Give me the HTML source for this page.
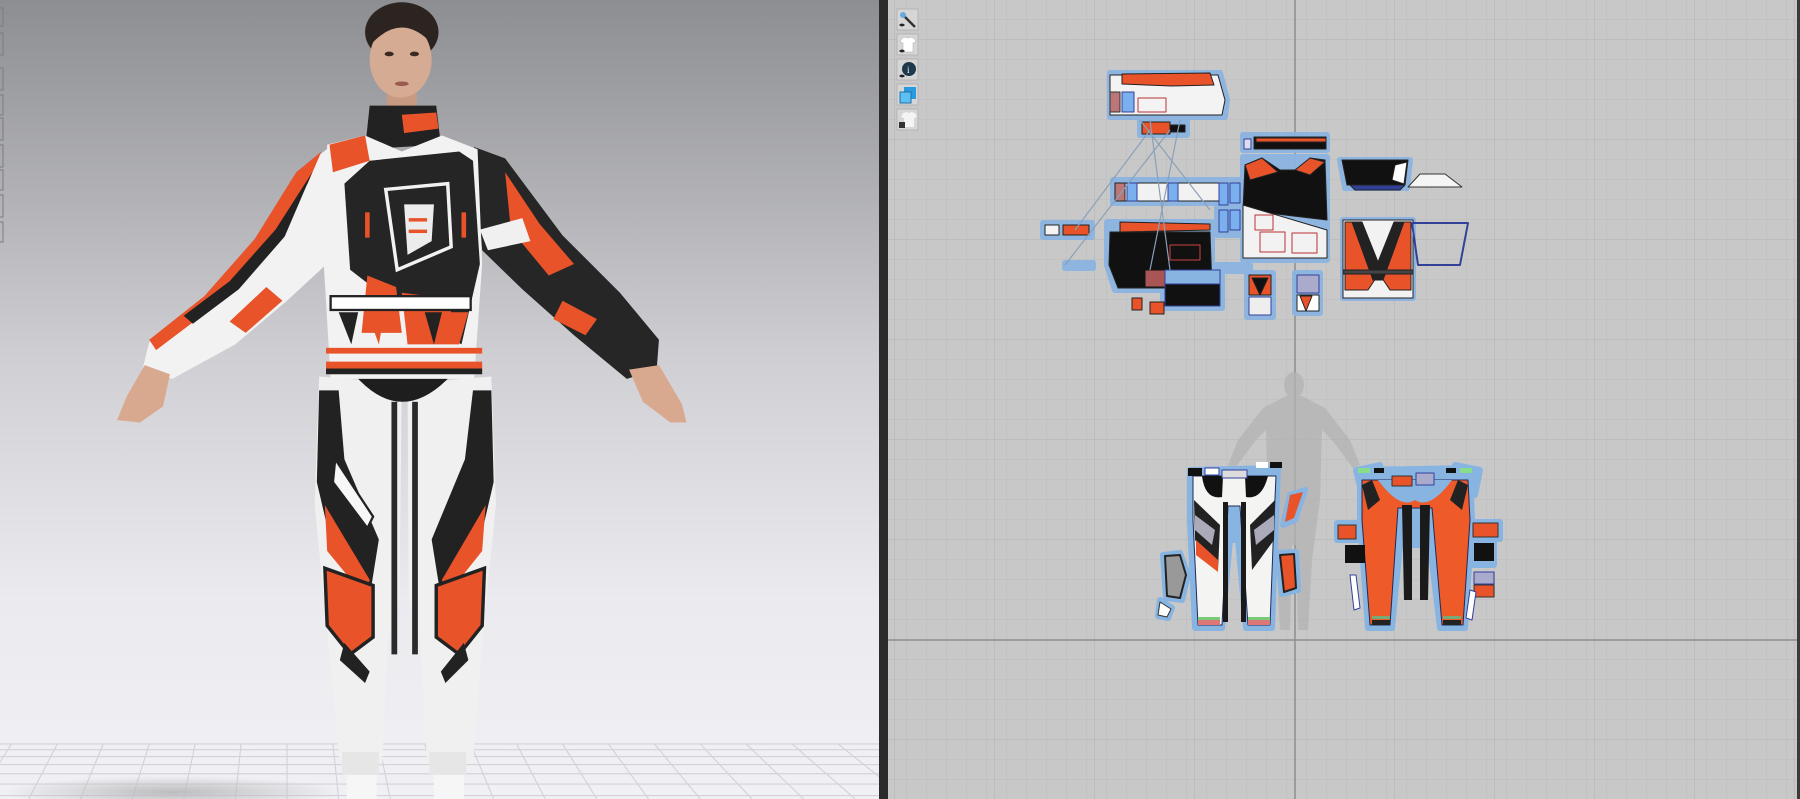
<!DOCTYPE html>
<html><head><meta charset="utf-8"><style>
html,body{margin:0;padding:0;width:1800px;height:799px;overflow:hidden;background:#c8c8c8;font-family:"Liberation Sans",sans-serif}
svg{display:block}
</style></head><body>
<svg width="1800" height="799" viewBox="0 0 1800 799" xmlns="http://www.w3.org/2000/svg">
<defs>
<linearGradient id="lg" x1="0" y1="0" x2="0" y2="1">
<stop offset="0" stop-color="#8d8e92"/><stop offset="0.45" stop-color="#cfcfd4"/><stop offset="0.75" stop-color="#eaeaef"/><stop offset="1" stop-color="#f1f1f5"/></linearGradient>
<pattern id="g1" width="20" height="20" patternUnits="userSpaceOnUse" x="887" y="0"><path d="M20 0V20M0 20H20" stroke="#bcbcbc" stroke-width="1" fill="none"/></pattern>
<pattern id="g2" width="100" height="100" patternUnits="userSpaceOnUse" x="895" y="40"><path d="M100 0V100M0 100H100" stroke="#b2b2b2" stroke-width="1" fill="none"/></pattern>
<radialGradient id="sh"><stop offset="0" stop-color="#bdbdc0"/><stop offset="1" stop-color="#bdbdc0" stop-opacity="0"/></radialGradient>
</defs>
<rect x="0" y="0" width="880" height="799" fill="url(#lg)"/>
<g fill="none" stroke="#7c7c80" stroke-width="1">
<rect x="-3" y="8" width="6" height="18"/><rect x="-3" y="33" width="6" height="22"/><rect x="-3" y="68" width="6" height="22"/><rect x="-3" y="95" width="6" height="20"/><rect x="-3" y="118" width="6" height="22"/><rect x="-3" y="145" width="6" height="22"/><rect x="-3" y="170" width="6" height="20"/><rect x="-3" y="195" width="6" height="22"/><rect x="-3" y="222" width="6" height="20"/>
</g>
<g transform="scale(1.148)">
<g stroke="#d2d2d8" stroke-width="1">
<line x1="0" y1="648" x2="766" y2="648"/><line x1="0" y1="653" x2="766" y2="653"/><line x1="0" y1="659" x2="766" y2="659"/><line x1="0" y1="666" x2="766" y2="666"/><line x1="0" y1="674" x2="766" y2="674"/><line x1="0" y1="683" x2="766" y2="683"/><line x1="0" y1="693" x2="766" y2="693"/>
<line x1="10" y1="648" x2="-20" y2="696"/><line x1="50" y1="648" x2="25" y2="696"/><line x1="90" y1="648" x2="70" y2="696"/><line x1="130" y1="648" x2="115" y2="696"/><line x1="170" y1="648" x2="160" y2="696"/><line x1="210" y1="648" x2="205" y2="696"/><line x1="250" y1="648" x2="250" y2="696"/><line x1="290" y1="648" x2="295" y2="696"/><line x1="330" y1="648" x2="340" y2="696"/><line x1="370" y1="648" x2="385" y2="696"/><line x1="410" y1="648" x2="430" y2="696"/><line x1="450" y1="648" x2="475" y2="696"/><line x1="490" y1="648" x2="520" y2="696"/><line x1="530" y1="648" x2="565" y2="696"/><line x1="570" y1="648" x2="610" y2="696"/><line x1="610" y1="648" x2="655" y2="696"/><line x1="650" y1="648" x2="700" y2="696"/><line x1="690" y1="648" x2="745" y2="696"/><line x1="730" y1="648" x2="790" y2="696"/>
</g>
<ellipse cx="150" cy="690" rx="150" ry="14" fill="url(#sh)"/>
<polygon points="287,128 262,148 225,210 180,262 130,298 124,322 150,330 205,300 250,262 290,225" fill="#f2f2f2"/>
<polygon points="280,132 258,150 222,208 178,258 130,296 136,305 185,268 232,216 268,160" fill="#e8532a"/>
<polygon points="272,150 240,200 200,245 160,275 168,282 208,252 248,206" fill="#222"/>
<polygon points="232,250 200,280 214,290 246,262" fill="#e8532a"/>
<polygon points="126,318 148,326 142,354 122,368 102,366 110,346" fill="#d9a98f"/>
<polygon points="413,128 440,138 490,205 540,255 574,296 572,322 546,330 500,292 455,252 420,218" fill="#262626"/>
<polygon points="440,150 470,195 500,230 478,240 445,200" fill="#e8532a"/>
<polygon points="418,200 455,190 462,210 425,218" fill="#f0f0f0"/>
<polygon points="490,262 520,278 510,292 482,278" fill="#e8532a"/>
<polygon points="548,322 574,318 594,352 598,368 584,368 560,350" fill="#d9a98f"/>
<ellipse cx="350" cy="28" rx="32" ry="26" fill="#2b2420"/>
<rect x="337" y="70" width="26" height="25" fill="#c99a82"/>
<ellipse cx="349" cy="52" rx="27" ry="33" fill="#d6ab93"/>
<path d="M322 40 Q350 8 378 40 L378 28 Q350 -2 322 28Z" fill="#2b2420"/>
<ellipse cx="339" cy="47" rx="4" ry="2" fill="#3a2a22"/><ellipse cx="361" cy="47" rx="4" ry="2" fill="#3a2a22"/>
<ellipse cx="350" cy="73" rx="6" ry="2" fill="#9a5a50"/>
<polygon points="322,92 380,92 384,126 318,130" fill="#222"/>
<polygon points="350,100 380,98 382,112 352,116" fill="#e8532a"/>
<polygon points="285,126 318,118 350,132 385,118 416,130 420,230 413,330 288,330 282,230" fill="#f2f2f2"/>
<polygon points="287,126 318,118 322,140 290,150" fill="#e8532a"/>
<polygon points="300,160 322,140 400,132 412,140 418,230 402,300 340,262 305,235" fill="#252525"/>
<polygon points="336,165 390,160 393,215 346,235" fill="none" stroke="#f2f2f2" stroke-width="3"/>
<polygon points="352,178 378,178 376,210 355,222" fill="#ececec"/>
<rect x="356" y="190" width="16" height="3" fill="#e8532a"/><rect x="356" y="200" width="16" height="3" fill="#e8532a"/>
<polygon points="320,240 345,250 350,290 315,290" fill="#e8532a"/>
<polygon points="350,255 390,260 400,300 355,300" fill="#e8532a"/>
<rect x="318" y="185" width="4" height="22" fill="#e8532a"/><rect x="402" y="185" width="4" height="22" fill="#e8532a"/>
<rect x="288" y="258" width="122" height="12" fill="#fff" stroke="#222" stroke-width="2"/>
<polygon points="295,272 312,272 306,300" fill="#222"/><polygon points="320,272 335,272 330,300" fill="#e8532a"/>
<polygon points="370,272 385,272 378,300" fill="#222"/><polygon points="392,272 408,272 400,300" fill="#e8532a"/>
<rect x="284" y="303" width="136" height="5" fill="#e8532a"/><rect x="284" y="315" width="136" height="6" fill="#e8532a"/>
<rect x="284" y="321" width="136" height="5" fill="#222"/>
<polygon points="278,328 350,334 348,520 338,560 333,665 296,665 286,560 274,440" fill="#f0f0f0"/>
<polygon points="355,334 428,328 432,440 420,560 412,665 372,665 366,560 356,520" fill="#f0f0f0"/>
<path d="M312 330 Q350 370 390 330 Z" fill="#1e1e1e"/>
<polygon points="278,340 295,340 300,400 330,470 322,520 290,480 276,420" fill="#222"/>
<polygon points="283,440 322,505 318,520 285,480" fill="#e8532a"/>
<polygon points="428,340 412,340 405,400 376,470 384,520 416,480 430,420" fill="#222"/>
<polygon points="423,440 385,505 388,520 420,480" fill="#e8532a"/>
<polygon points="292,400 325,450 320,460 290,420" fill="#f7f7f7" stroke="#222" stroke-width="2"/>
<polygon points="283,495 325,510 325,555 305,570 285,545" fill="#e8532a" stroke="#222" stroke-width="3"/>
<polygon points="422,495 380,510 380,555 400,570 420,545" fill="#e8532a" stroke="#222" stroke-width="3"/>
<rect x="341" y="350" width="5" height="220" fill="#2a2a2a"/><rect x="359" y="350" width="5" height="220" fill="#2a2a2a"/>
<polygon points="300,560 322,585 318,595 296,575" fill="#222"/><polygon points="404,560 384,585 388,595 408,575" fill="#222"/>
<rect x="298" y="655" width="32" height="20" fill="#e6e6e6"/><rect x="374" y="655" width="32" height="20" fill="#e6e6e6"/>
<rect x="302" y="675" width="26" height="21" fill="#f6f6f6"/><rect x="378" y="675" width="26" height="21" fill="#f6f6f6"/>
</g>
<rect x="879" y="0" width="9" height="799" fill="#2b2b2b"/>
<rect x="888" y="0" width="912" height="799" fill="#c8c8c8"/>
<rect x="888" y="0" width="912" height="799" fill="url(#g1)"/>
<rect x="888" y="0" width="912" height="799" fill="url(#g2)"/>
<line x1="1295" y1="0" x2="1295" y2="799" stroke="#8e8e8e" stroke-width="1.5"/>
<line x1="888" y1="640" x2="1800" y2="640" stroke="#8e8e8e" stroke-width="1.5"/>
<rect x="1797" y="0" width="3" height="799" fill="#3a3a3a"/>
<g fill="#b3b3b3" opacity="0.75">
<ellipse cx="1294" cy="385" rx="10" ry="13"/>
<polygon points="1286,396 1302,396 1325,408 1350,440 1360,465 1353,468 1332,440 1322,430 1320,500 1312,560 1308,630 1298,630 1296,545 1292,545 1290,630 1280,630 1276,560 1268,500 1266,430 1256,440 1235,468 1228,465 1238,440 1263,408"/>
</g>
<g>
<rect x="897" y="9" width="21" height="21" fill="#d6d6d6" stroke="#b4b4b4"/>
<path d="M903 15 L915 27" stroke="#333" stroke-width="2.5"/><circle cx="903" cy="15" r="3" fill="#6aa8e0"/><path d="M899 25 q3-3 6 0 q-3 3-6 0z" fill="#222"/>
<rect x="897" y="34" width="21" height="21" fill="#d6d6d6" stroke="#b4b4b4"/>
<path d="M902 38 l4-1 q2 2 4 0 l4 1 2 4-3 1v9h-10v-9l-3-1z" fill="#fff" stroke="#aaa" stroke-width=".5"/><path d="M899 51 q3-3 6 0 q-3 3-6 0z" fill="#222"/>
<rect x="897" y="59" width="21" height="21" fill="#d6d6d6" stroke="#b4b4b4"/>
<circle cx="909" cy="69" r="7" fill="#1e3a4a"/><text x="907" y="73" font-size="9" fill="#fff" font-family="Liberation Serif">i</text><path d="M899 76 q3-3 6 0 q-3 3-6 0z" fill="#222"/>
<rect x="897" y="84" width="21" height="21" fill="#d6d6d6" stroke="#b4b4b4"/>
<rect x="904" y="87" width="12" height="12" fill="#2a9ae0"/><rect x="900" y="92" width="11" height="11" fill="#5cc0f5" stroke="#1d6fa8"/>
<rect x="897" y="109" width="21" height="21" fill="#d6d6d6" stroke="#b4b4b4"/>
<path d="M903 113 l4-1 q2 2 4 0 l4 1 2 4-3 1v9h-10v-9l-3-1z" fill="#f4f4f4"/><rect x="899" y="122" width="6" height="6" fill="#333"/>
</g>
<g stroke-linejoin="round">
<g stroke="#88b4e2" stroke-width="6" fill="#88b4e2" opacity="0.9">
<polygon points="1110,73 1220,73 1227,100 1225,117 1110,117"/>
<rect x="1140" y="120" width="47" height="15"/><rect x="1243" y="135" width="84" height="15"/>
<rect x="1113" y="180" width="114" height="23"/><rect x="1043" y="223" width="49" height="14"/>
<polygon points="1107,222 1212,222 1212,290 1115,290 1107,265"/>
<rect x="1217" y="180" width="26" height="55"/><rect x="1243" y="157" width="84" height="103"/>
<polygon points="1340,160 1410,160 1407,188 1345,188"/><rect x="1343" y="220" width="70" height="78"/>
<rect x="1163" y="268" width="59" height="40"/><rect x="1247" y="273" width="26" height="44"/><rect x="1295" y="273" width="25" height="40"/>
<rect x="1065" y="263" width="28" height="5"/><rect x="1215" y="265" width="35" height="6"/>
</g>
<g stroke="#222" stroke-width="1" fill="#f3f3f3">
<polygon points="1110,75 1218,75 1225,100 1222,115 1110,115"/>
<polygon points="1122,74 1210,73 1214,85 1172,86 1122,84" fill="#e8532a"/>
<rect x="1110" y="92" width="10" height="20" fill="#b77" stroke="#333"/>
<rect x="1122" y="92" width="12" height="20" fill="#7ab0ee" stroke="#33409a"/>
<rect x="1138" y="98" width="28" height="14" fill="none" stroke="#b33"/>
<rect x="1142" y="122" width="28" height="12" fill="#e8532a"/><rect x="1170" y="125" width="15" height="7" fill="#111"/>
<rect x="1254" y="137" width="72" height="12" fill="#111"/><rect x="1256" y="138" width="70" height="4" fill="#e8532a"/>
<rect x="1244" y="139" width="7" height="10" fill="#dde" stroke="#33409a"/>
<rect x="1115" y="183" width="110" height="18" fill="#f2f2f2"/><rect x="1115" y="183" width="10" height="18" fill="#b77"/><rect x="1127" y="183" width="10" height="18" fill="#7ab0ee" stroke="#33409a"/>
<rect x="1168" y="183" width="10" height="18" fill="#7ab0ee" stroke="#33409a"/>
<rect x="1045" y="225" width="14" height="10"/><rect x="1063" y="225" width="26" height="10" fill="#e8532a"/>
<polygon points="1110,232 1210,232 1212,288 1118,288 1109,265" fill="#111"/>
<polygon points="1120,222 1210,224 1210,230 1120,232" fill="#e8532a"/>
<rect x="1170" y="245" width="30" height="15" fill="#111" stroke="#c44"/>
<rect x="1145" y="270" width="20" height="17" fill="#a55" stroke="#111"/>
<rect x="1219" y="183" width="9" height="22" fill="#7ab0ee" stroke="#33409a"/><rect x="1230" y="183" width="10" height="20" fill="#7ab0ee" stroke="#33409a"/>
<rect x="1219" y="210" width="9" height="22" fill="#7ab0ee" stroke="#33409a"/><rect x="1230" y="210" width="10" height="20" fill="#7ab0ee" stroke="#33409a"/>
<polygon points="1245,165 1262,158 1280,170 1300,170 1310,158 1325,160 1327,220 1243,210" fill="#111"/>
<polygon points="1245,165 1262,158 1278,172 1250,180" fill="#e8532a"/><polygon points="1295,170 1310,158 1325,162 1310,175" fill="#e8532a"/>
<polygon points="1243,205 1327,230 1327,258 1243,258" fill="#f2f2f2"/>
<rect x="1255" y="215" width="18" height="15" fill="none" stroke="#b33"/><rect x="1260" y="232" width="25" height="20" fill="none" stroke="#b33"/><rect x="1292" y="233" width="25" height="20" fill="none" stroke="#b33"/>
<polygon points="1342,160 1408,160 1405,185 1347,185" fill="#111"/><polygon points="1395,165 1407,162 1404,184 1392,180" fill="#fff"/>
<polygon points="1350,185 1405,185 1400,190 1355,190" fill="#33409a"/>
<polygon points="1408,187 1420,174 1445,174 1462,187" fill="#f5f5f5" stroke="#333"/>
<rect x="1343" y="220" width="70" height="78" fill="#f2f2f2"/>
<polygon points="1345,222 1360,222 1378,275 1368,290 1345,290" fill="#e8532a"/><polygon points="1411,222 1396,222 1380,275 1390,290 1411,290" fill="#e8532a"/>
<polygon points="1352,222 1362,222 1378,262 1394,222 1404,222 1383,280 1373,280" fill="#222"/>
<rect x="1343" y="270" width="70" height="4" fill="#444"/>
<polygon points="1412,223 1468,223 1460,265 1418,265" fill="none" stroke="#33409a" stroke-width="2"/>
<rect x="1165" y="270" width="55" height="36" fill="#111" stroke="#33409a"/><rect x="1165" y="270" width="55" height="14" fill="#88b4e2" stroke="#33409a"/>
<rect x="1249" y="275" width="22" height="20" fill="#e8532a"/><polygon points="1252,278 1260,295 1268,278" fill="#111"/>
<rect x="1249" y="297" width="22" height="18" fill="#eee" stroke="#33409a"/>
<rect x="1297" y="275" width="22" height="18" fill="#aac" stroke="#33409a"/><rect x="1297" y="295" width="22" height="16" fill="#fff"/><polygon points="1300,296 1306,311 1312,296" fill="#e8532a"/>
<rect x="1132" y="298" width="10" height="12" fill="#e8532a"/><rect x="1150" y="302" width="14" height="12" fill="#e8532a"/>
</g>
<g stroke="#8aa0b8" stroke-width="1.2">
<line x1="1075" y1="230" x2="1150" y2="130"/><line x1="1065" y1="265" x2="1170" y2="130"/><line x1="1150" y1="120" x2="1170" y2="270"/><line x1="1180" y1="120" x2="1150" y2="270"/><line x1="1140" y1="120" x2="1210" y2="210"/>
</g>
</g>
<g stroke-linejoin="round">
<g fill="#88b4e2" stroke="#88b4e2" stroke-width="6">
<polygon points="1190,470 1278,468 1276,520 1272,628 1246,628 1238,540 1230,540 1222,628 1195,628 1190,520"/>
<polygon points="1163,555 1180,553 1188,575 1182,600 1166,598"/><polygon points="1278,553 1296,552 1298,590 1282,594"/>
<polygon points="1160,600 1172,608 1168,618 1158,616"/><polygon points="1290,495 1305,490 1295,520 1283,525"/>
<polygon points="1360,470 1470,468 1472,520 1465,628 1440,628 1430,545 1400,545 1392,628 1368,628 1360,520"/>
<rect x="1337" y="523" width="20" height="17"/><rect x="1472" y="522" width="28" height="17"/><rect x="1472" y="540" width="22" height="25"/>
<polygon points="1356,470 1380,465 1385,492 1362,495"/><polygon points="1455,465 1480,470 1475,495 1452,492"/>
</g>
<polygon points="1193,476 1276,476 1274,520 1270,625 1248,625 1240,506 1228,506 1222,625 1198,625 1193,520" fill="#f4f5f2" stroke="#1e2a5a"/>
<path d="M1202 476 Q1205 500 1222 497 L1223 476Z M1268 476 Q1262 500 1246 497 L1245 476Z" fill="#111"/>
<rect x="1223" y="502" width="5" height="120" fill="#1a1a1a"/><rect x="1241" y="502" width="5" height="120" fill="#1a1a1a"/>
<polygon points="1194,500 1220,525 1218,570 1195,540" fill="#222"/><polygon points="1275,500 1250,525 1252,570 1274,540" fill="#222"/>
<polygon points="1195,515 1215,530 1212,545 1195,530" fill="#aab" /><polygon points="1274,515 1254,530 1256,545 1274,530" fill="#aab"/>
<polygon points="1196,540 1218,560 1218,572 1196,555" fill="#e8532a"/>
<rect x="1198" y="620" width="22" height="5" fill="#d77"/><rect x="1248" y="620" width="22" height="5" fill="#d77"/>
<rect x="1198" y="617" width="22" height="3" fill="#7c7"/><rect x="1248" y="617" width="22" height="3" fill="#7c7"/>
<rect x="1188" y="468" width="14" height="8" fill="#111"/><rect x="1205" y="468" width="14" height="7" fill="#fff" stroke="#33409a"/><rect x="1222" y="470" width="25" height="8" fill="#ddd" stroke="#33409a"/><rect x="1256" y="462" width="12" height="6" fill="#fff"/><rect x="1270" y="462" width="12" height="6" fill="#111"/>
<polygon points="1165,556 1180,555 1186,575 1180,598 1167,596" fill="#999" stroke="#222" stroke-width="2"/>
<polygon points="1280,555 1294,554 1296,588 1284,592" fill="#e8532a" stroke="#222" stroke-width="2"/>
<polygon points="1290,495 1303,492 1294,518 1285,522" fill="#e8532a"/>
<polygon points="1160,602 1171,609 1167,617 1158,615" fill="#fff" stroke="#333"/>
<polygon points="1362,480 1468,480 1470,520 1463,625 1442,625 1432,508 1398,508 1390,625 1370,625 1362,520" fill="#ee5a28" stroke="#1e2a5a"/>
<path d="M1378 480 Q1400 510 1415 500 Q1430 510 1452 480" fill="#88b4e2"/>
<polygon points="1402,505 1412,505 1412,600 1404,600" fill="#1a1a1a"/><polygon points="1420,505 1430,505 1428,600 1420,600" fill="#1a1a1a"/>
<polygon points="1362,485 1372,480 1380,500 1368,510" fill="#222"/><polygon points="1468,485 1458,480 1450,500 1462,510" fill="#222"/>
<rect x="1372" y="620" width="18" height="5" fill="#222"/><rect x="1443" y="620" width="18" height="5" fill="#222"/>
<rect x="1372" y="616" width="18" height="3" fill="#7a7"/><rect x="1443" y="616" width="18" height="3" fill="#7a7"/>
<rect x="1358" y="468" width="12" height="5" fill="#8d8"/><rect x="1374" y="468" width="10" height="5" fill="#111"/><rect x="1446" y="468" width="10" height="5" fill="#111"/><rect x="1460" y="468" width="12" height="5" fill="#8d8"/>
<rect x="1392" y="476" width="20" height="10" fill="#e8532a" stroke="#333"/><rect x="1416" y="473" width="18" height="12" fill="#aac" stroke="#33409a"/>
<rect x="1338" y="525" width="18" height="14" fill="#e8532a" stroke="#333"/><rect x="1473" y="523" width="25" height="14" fill="#e8532a" stroke="#333"/>
<rect x="1474" y="543" width="20" height="18" fill="#111"/><rect x="1474" y="572" width="20" height="12" fill="#aac" stroke="#33409a"/><rect x="1474" y="585" width="20" height="12" fill="#e8532a" stroke="#333"/>
<rect x="1345" y="545" width="20" height="18" fill="#111"/>
<polygon points="1350,575 1356,575 1360,608 1354,610" fill="#fff" stroke="#33409a"/><polygon points="1470,590 1476,592 1472,620 1466,618" fill="#fff" stroke="#33409a"/>
</g>
</svg>
</body></html>
